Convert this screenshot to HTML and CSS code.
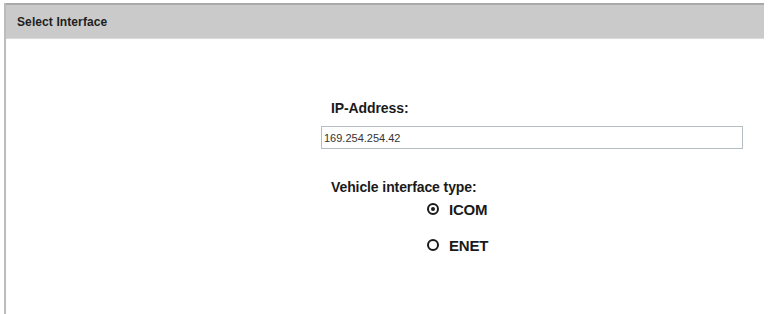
FILE: index.html
```html
<html>
    <head>
        <link rel="stylesheet" href="styles.css">
    </head>
    <body>
        <div class="window">
            <div class="title-bar">
                <span class="name">Select Interface</span>
            </div>

            <div class="content">
                <div class="form">
                    <div class="field">
                        <label for="ip">IP-Address:</label>
                        <input id="ip" type="text" value="169.254.254.42">
                    </div>

                    <div class="field">
                        <div class="label">Vehicle interface type:</div>
                        <ul class="options">
                            <li><span class="radio checked"></span><span>ICOM</span></li>
                            <li><span class="radio"></span><span>ENET</span></li>
                        </ul>
                    </div>
                </div>
            </div>
        </div>
    </body>
</html>
```

FILE: styles.css
```css
body {
    margin: 0;
    background: #fff;
    font-family: "Liberation Sans", Arial, sans-serif;
    color: #1a1a1a;
}
.window {
    margin: 3px 4px 0 4px;
    height: 311px;
    border-left: 2px solid #bcbcbc;
}
.title-bar {
    height: 33px;
    background: #cacaca;
    border-top: 2px solid #a9a9a9;
    border-bottom: 1px solid #dadada;
    display: flex;
    align-items: center;
    padding-left: 11px;
}
.title-bar .name {
    font-size: 12px;
    font-weight: bold;
    letter-spacing: 0.1px;
    color: #1e1e1e;
}
.content {
    padding: 61px 0 0 315px;
}
.form {
    width: 422px;
}
.field label,
.field .label {
    display: block;
    font-size: 14px;
    line-height: 16px;
    font-weight: bold;
    letter-spacing: -0.1px;
    padding-left: 10px;
}
.field label {
    margin-bottom: 10px;
}
.field input {
    display: block;
    box-sizing: border-box;
    width: 100%;
    height: 23px;
    border: 1px solid #b4bec0;
    padding: 0 2px;
    font-family: "Liberation Sans", Arial, sans-serif;
    font-size: 11px;
    color: #333;
    outline: none;
}
.field + .field {
    margin-top: 30px;
}
.options {
    list-style: none;
    margin: 4px 0 0 106px;
    padding: 0;
}
.options li {
    display: flex;
    align-items: center;
    height: 20px;
    font-size: 15px;
    font-weight: bold;
    letter-spacing: -0.2px;
}
.options li + li {
    margin-top: 16px;
}
.radio {
    box-sizing: border-box;
    width: 12px;
    height: 12px;
    border: 2px solid #1a1a1a;
    border-radius: 50%;
    margin-right: 10px;
    position: relative;
}
.radio.checked::after {
    content: "";
    position: absolute;
    left: 2px;
    top: 2px;
    width: 4px;
    height: 4px;
    border-radius: 50%;
    background: #1a1a1a;
}
```
